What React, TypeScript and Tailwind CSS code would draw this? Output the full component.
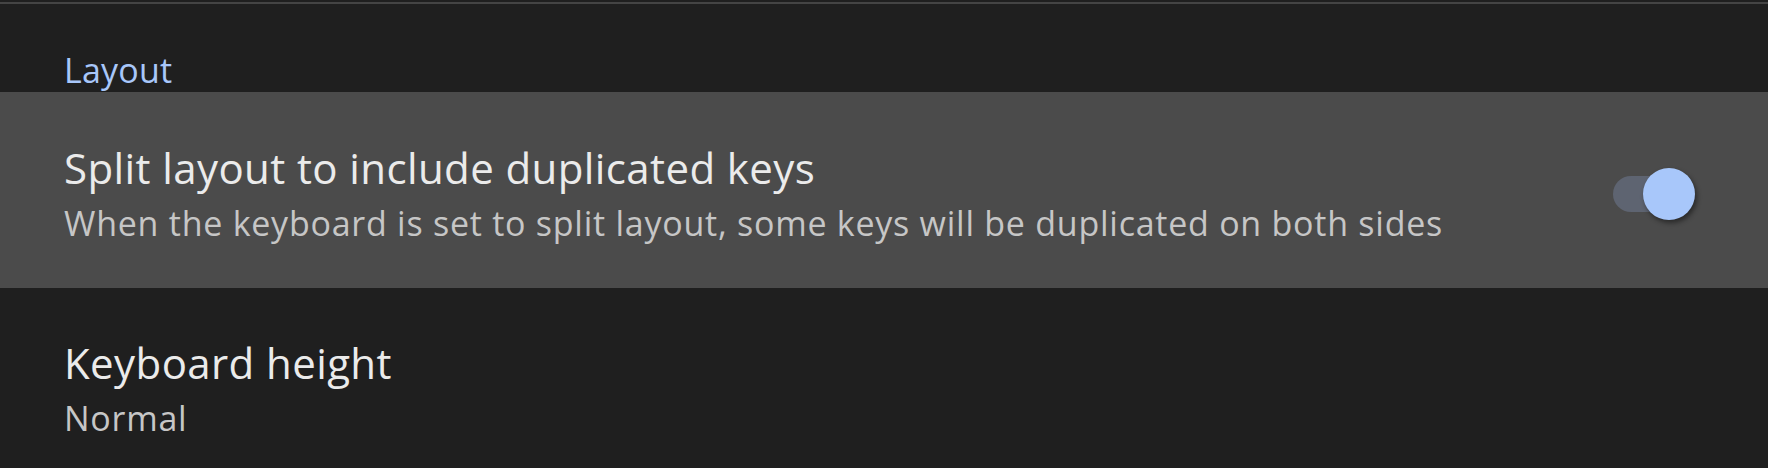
import React from "react";

const font = { fontFamily: '"Open Sans", Roboto, sans-serif' };

const Toggle = ({ on }: { on: boolean }) => (
  <div className="relative w-[82px] h-[52px] shrink-0">
    <div className="absolute left-0 top-[8px] w-[77px] h-[36px] rounded-full bg-[#5e6471]" />
    <div
      className={
        on
          ? "absolute right-0 top-0 w-[52px] h-[52px] rounded-full bg-[#a8c7fa] shadow-[2px_3px_5px_rgba(0,0,0,0.45)]"
          : "absolute left-0 top-0 w-[52px] h-[52px] rounded-full bg-[#c4c7c5] shadow-[2px_3px_5px_rgba(0,0,0,0.45)]"
      }
    />
  </div>
);

const SettingRow = ({
  title,
  summary,
  highlighted,
  toggle,
}: {
  title: string;
  summary: string;
  highlighted?: boolean;
  toggle?: boolean;
}) => (
  <div
    className={`flex items-center pl-[64px] pr-[73px] ${
      highlighted ? "bg-[#4b4b4b] pt-[51px] pb-[43px]" : "pt-[50px] pb-[38px]"
    }`}
  >
    <div className="flex flex-col flex-1 gap-[8px]">
      <div className="text-[42px] leading-[50px] tracking-[0.4px] text-[#ebebeb]">{title}</div>
      <div className="text-[34px] leading-[44px] tracking-[0.75px] text-[#c6c6c6]">{summary}</div>
    </div>
    {toggle !== undefined && <Toggle on={toggle} />}
  </div>
);

export default function App() {
  return (
    <div className="w-full h-[468px] bg-[#1f1f1f] overflow-hidden" style={font}>
      <div className="pt-[2px]">
        <div className="h-[2px] bg-[#444444]" />
      </div>
      <div className="pl-[64px] pt-[46px] pb-[2px]">
        <div className="text-[34px] leading-[40px] font-medium tracking-[0.2px] text-[#a8c7fa]">Layout</div>
      </div>
      <SettingRow
        highlighted
        title="Split layout to include duplicated keys"
        summary="When the keyboard is set to split layout, some keys will be duplicated on both sides"
        toggle={true}
      />
      <SettingRow title="Keyboard height" summary="Normal" />
    </div>
  );
}
